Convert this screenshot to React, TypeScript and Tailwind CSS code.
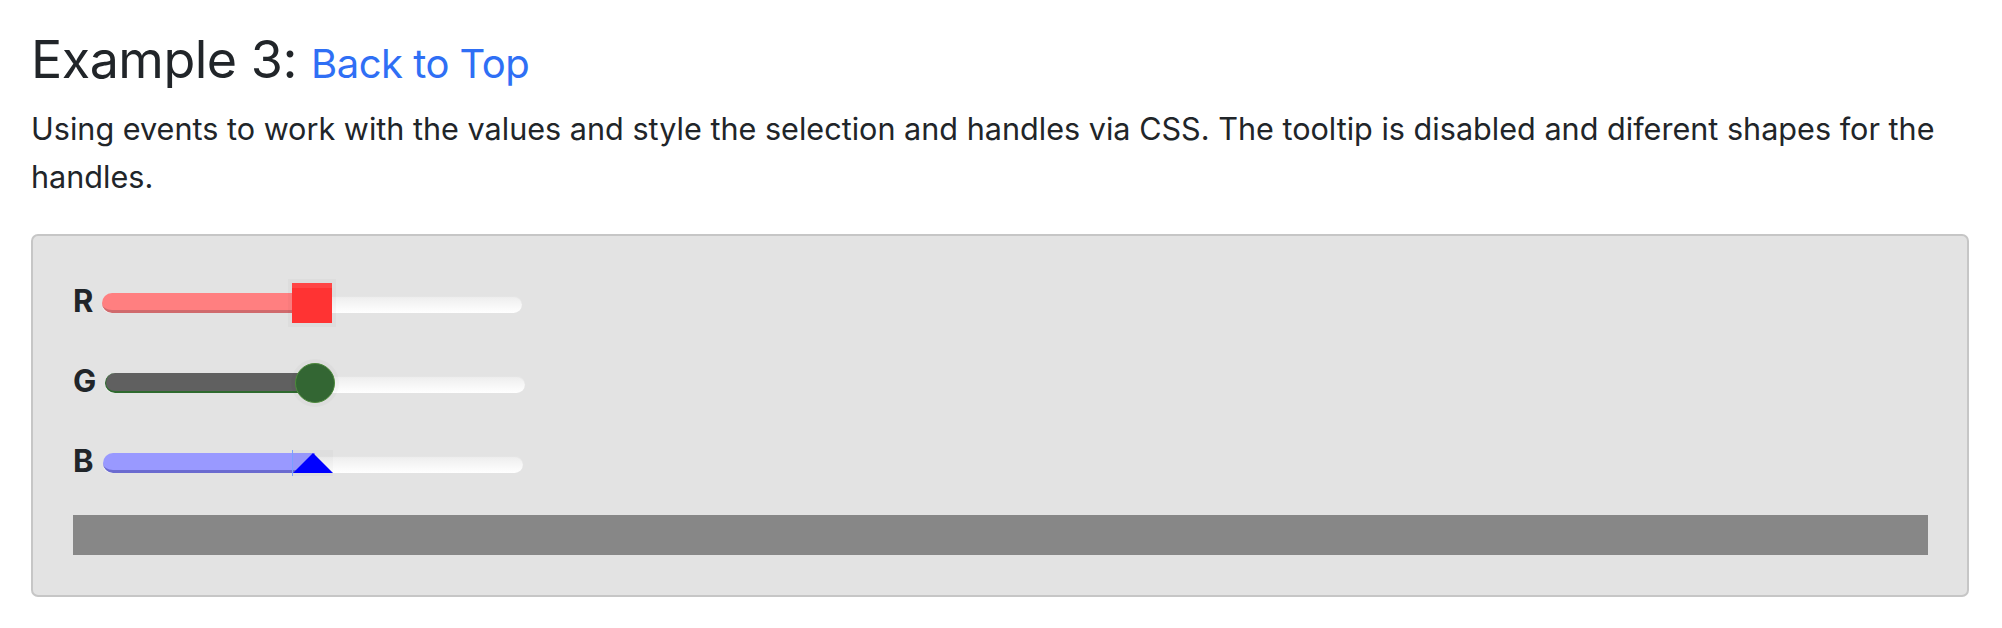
const font = { fontFamily: "Inter, 'Liberation Sans', sans-serif" };

function Slider({
  selection,
  handle,
}: {
  selection: string;
  handle: React.ReactNode;
}) {
  return (
    <div className="relative flex w-[420px] h-[17px] mt-[3px] rounded-full bg-linear-to-b from-[#ededed] to-white shadow-[inset_0_1px_1px_rgba(0,0,0,0.04)]">
      <div className={`-mt-[3px] h-[20px] w-[212px] rounded-l-full ${selection}`} />
      <div className="absolute left-[190px] -top-[13px] h-[40px] w-[40px] flex items-center justify-center">
        {handle}
      </div>
    </div>
  );
}

function Row({ label, children }: { label: string; children: React.ReactNode }) {
  return (
    <div className="flex items-center h-[40px]">
      <span className="text-[31px] font-bold leading-none text-[#212529] mr-[9px] mb-[6px]">{label}</span>
      {children}
    </div>
  );
}

export default function App() {
  return (
    <div className="bg-white min-h-screen pt-[29px] text-[#212529]" style={font}>
      <div className="ml-[31px] w-[1938px]">
        <h3 className="text-[52px] font-normal leading-[1.2] tracking-[-0.5px]">
          Example 3:{" "}
          <small className="text-[40px]">
            <a href="#top" className="text-[#2f6ff5]">
              Back to Top
            </a>
          </small>
        </h3>
        <p className="mt-[14px] text-[30.6px] leading-[48px]">
          Using events to work with the values and style the selection and handles via CSS. The tooltip is disabled and
          diferent shapes for the handles.
        </p>
        <div className="mt-[33px] rounded-[7px] border-2 border-[#c6c6c6] bg-[#e3e3e3] pl-[40px] pr-[39px] pt-[47px] pb-[40px]">
          <div className="flex flex-col gap-[40px]">
            <Row label="R">
              <Slider
                selection="bg-[#ff7f80] border-b-[3px] border-[#d06a6d]"
                handle={
                  <div className="h-[40px] w-[40px] bg-[#ff3333] border-t-[5px] border-[#ff4545] shadow-[0_0_0_4px_rgba(0,0,0,0.025)]" />
                }
              />
            </Row>
            <Row label="G">
              <Slider
                selection="bg-[#606060] border-b-[2px] border-l border-[#2f6a2f]"
                handle={
                  <div className="h-[40px] w-[40px] rounded-full bg-[#336633] border border-[#4d8a3c] shadow-[0_0_0_4px_rgba(0,0,0,0.025)]" />
                }
              />
            </Row>
            <Row label="B">
              <Slider
                selection="bg-[#9999ff] border-b-[3px] border-[#6b6bd0]"
                handle={
                  <div className="flex h-[26px] w-[46px] items-center justify-center bg-[rgba(0,0,0,0.02)] border-l border-l-[#7aa0ff]">
                    <svg width="40" height="20" viewBox="0 0 40 20">
                      <polygon points="20,0 40,20 0,20" fill="#0000ff" />
                    </svg>
                  </div>
                }
              />
            </Row>
          </div>
          <div className="mt-[32px] h-[40px] bg-[#878787]" />
        </div>
      </div>
    </div>
  );
}
